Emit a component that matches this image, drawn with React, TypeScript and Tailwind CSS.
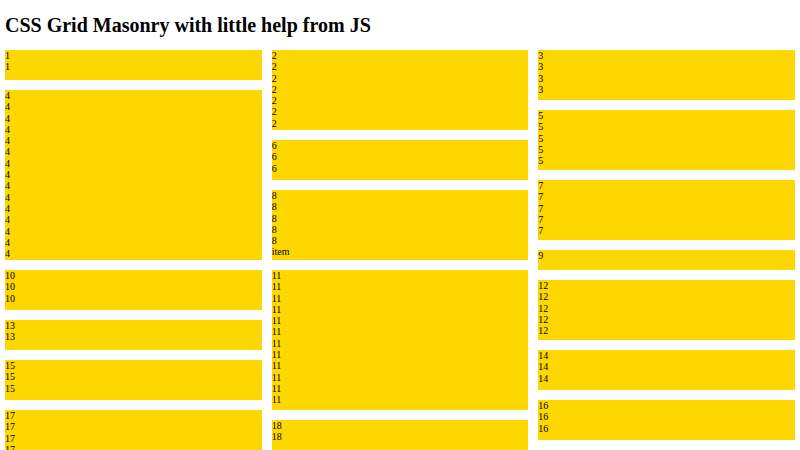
const columns: { n: number; lines: string[]; h: number }[][] = [
  [
    { n: 1, lines: Array(2).fill("1"), h: 30 },
    { n: 4, lines: Array(15).fill("4"), h: 170 },
    { n: 10, lines: Array(3).fill("10"), h: 40 },
    { n: 13, lines: Array(2).fill("13"), h: 30 },
    { n: 15, lines: Array(3).fill("15"), h: 40 },
    { n: 17, lines: Array(4).fill("17"), h: 50 },
  ],
  [
    { n: 2, lines: Array(7).fill("2"), h: 80 },
    { n: 6, lines: Array(3).fill("6"), h: 40 },
    { n: 8, lines: [...Array(5).fill("8"), "item"], h: 70 },
    { n: 11, lines: Array(12).fill("11"), h: 140 },
    { n: 18, lines: Array(2).fill("18"), h: 30 },
  ],
  [
    { n: 3, lines: Array(4).fill("3"), h: 50 },
    { n: 5, lines: Array(5).fill("5"), h: 60 },
    { n: 7, lines: Array(5).fill("7"), h: 60 },
    { n: 9, lines: ["9"], h: 20 },
    { n: 12, lines: Array(5).fill("12"), h: 60 },
    { n: 14, lines: Array(3).fill("14"), h: 40 },
    { n: 16, lines: Array(3).fill("16"), h: 40 },
  ],
];

export default function App() {
  return (
    <div className="w-[800px] h-[450px] overflow-hidden bg-white px-[5px] font-['Liberation_Serif',serif] text-black">
      <h1 className="pt-[13px] h-[50px] text-[20px] font-bold leading-[24px]">
        CSS Grid Masonry with little help from JS
      </h1>
      <div className="grid grid-cols-3 gap-[10px]">
        {columns.map((col, i) => (
          <div key={i} className="flex flex-col gap-[10px]">
            {col.map((item) => (
              <div
                key={item.n}
                className="bg-[#ffd700] overflow-hidden text-[10px] leading-[11.3px]"
                style={{ height: item.h }}
              >
                {item.lines.map((l, j) => (
                  <div key={j}>{l}</div>
                ))}
              </div>
            ))}
          </div>
        ))}
      </div>
    </div>
  );
}
